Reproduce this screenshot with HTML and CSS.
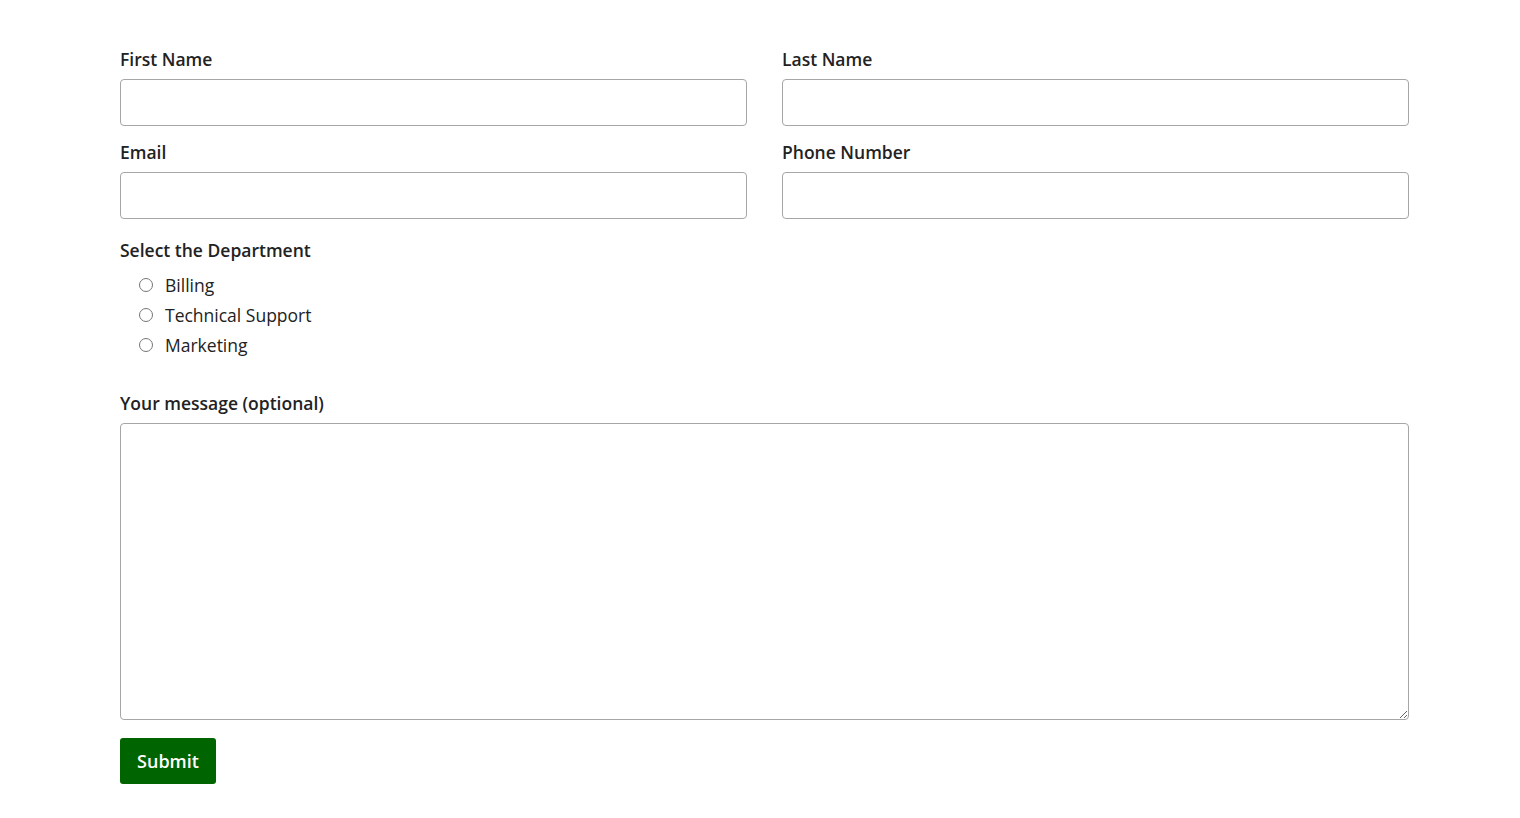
FILE: index.html
```html
<!DOCTYPE html>
<html lang="en">
    <head>
        <meta charset="UTF-8" />
        <meta name="viewport" content="width=device-width, initial-scale=1.0" />
        <title>Contact</title>
        <link rel="stylesheet" href="styles.css">
    </head>

    <body>
        <form class="contact-form">
            <div class="row">
                <div class="field">
                    <label for="firstName">First Name</label>
                    <input type="text" id="firstName" />
                </div>
                <div class="field">
                    <label for="lastName">Last Name</label>
                    <input type="text" id="lastName" />
                </div>
            </div>
            <div class="row">
                <div class="field">
                    <label for="email">Email</label>
                    <input type="email" id="email" />
                </div>
                <div class="field">
                    <label for="phone">Phone Number</label>
                    <input type="tel" id="phone" />
                </div>
            </div>

            <div class="departments" role="radiogroup" aria-labelledby="deptLabel">
                <p class="group-label" id="deptLabel">Select the Department</p>
                <label class="option"><input type="radio" name="dept" value="billing" /><span>Billing</span></label>
                <label class="option"><input type="radio" name="dept" value="support" /><span>Technical Support</span></label>
                <label class="option"><input type="radio" name="dept" value="marketing" /><span>Marketing</span></label>
            </div>

            <div class="field message">
                <label for="message">Your message (optional)</label>
                <textarea id="message"></textarea>
            </div>

            <button type="submit" class="submit">Submit</button>
        </form>
    </body>
</html>
```

FILE: styles.css
```css
* {
    margin: 0;
    padding: 0;
    box-sizing: border-box;
}

body {
    font-family: "Open Sans", "Noto Sans", sans-serif;
    color: #222;
    background: #fff;
    padding: 44px 111px 0 120px;
}

.contact-form {
    display: flex;
    flex-direction: column;
}

.row {
    display: grid;
    grid-template-columns: 1fr 1fr;
    column-gap: 35px;
    margin-bottom: 11px;
}

.field {
    display: flex;
    flex-direction: column;
}

.field > label,
.group-label {
    font-size: 17.5px;
    font-weight: 600;
    line-height: 30px;
    margin-bottom: 5px;
}

.field input {
    height: 47px;
    border: 1px solid #a6a6a6;
    border-radius: 4px;
    font-size: 18px;
    padding: 6px 10px;
}

.departments {
    display: flex;
    flex-direction: column;
    margin-top: 5px;
}

.option {
    display: flex;
    align-items: center;
    font-size: 17.5px;
    height: 30px;
    padding-left: 18px;
}

.option input {
    width: 14px;
    height: 14px;
    margin: 0 12px 0 1px;
    accent-color: #555;
}

.message {
    margin-top: 28px;
}

.message textarea {
    height: 297px;
    border: 1px solid #a6a6a6;
    border-radius: 4px;
    resize: vertical;
    font-size: 18px;
    padding: 8px 10px;
}

.submit {
    align-self: flex-start;
    margin-top: 18px;
    width: 96px;
    height: 46px;
    border: none;
    border-radius: 3px;
    background-color: #006400;
    color: #fff;
    font-family: inherit;
    font-size: 18px;
    font-weight: 600;
}
```
